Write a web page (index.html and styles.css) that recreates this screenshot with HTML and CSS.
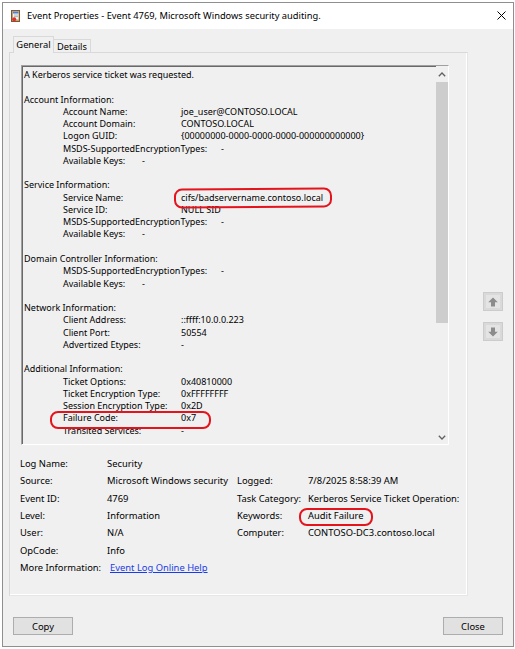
FILE: index.html
```html
<!DOCTYPE html>
<html>
<head>
<meta charset="utf-8">
<title>Event Properties</title>
<link rel="stylesheet" href="styles.css">
</head>
<body>
<div class="page">
  <div class="window">
    <div class="titlebar">
      <svg class="appicon" width="9" height="12" viewBox="0 0 9 12">
        <rect x="0.5" y="0.5" width="8" height="11" fill="#c9a26a" stroke="#7a5a2e"/>
        <rect x="2" y="1.5" width="5.5" height="8" fill="#f4f4f4"/>
        <rect x="2" y="1.5" width="5.5" height="2" fill="#4f7fd0"/>
        <line x1="3" y1="5" x2="7" y2="5" stroke="#9aa" stroke-width="0.8"/>
        <line x1="3" y1="6.6" x2="7" y2="6.6" stroke="#9aa" stroke-width="0.8"/>
        <circle cx="3.2" cy="9.2" r="2" fill="#e03030"/>
      </svg>
      <span class="title">Event Properties - Event 4769, Microsoft Windows security auditing.</span>
      <svg class="closex" width="9" height="9" viewBox="0 0 9 9">
        <path d="M0.5 0.5 L8.5 8.5 M8.5 0.5 L0.5 8.5" stroke="#000" stroke-width="1"/>
      </svg>
    </div>
    <div class="body">
      <div class="main">
        <div class="tabwrap">
          <div class="tabs">
            <div class="tab sel">General</div>
            <div class="tab">Details</div>
          </div>
          <div class="panel">
            <div class="textbox">
              <div class="tbtext">
                <div class="ln">A Kerberos service ticket was requested.</div>
                <div class="ln"></div>
                <div class="ln">Account Information:</div>
                <div class="ln in"><span class="k k4">Account Name:</span><span>joe_user@CONTOSO.LOCAL</span></div>
                <div class="ln in"><span class="k k4">Account Domain:</span><span>CONTOSO.LOCAL</span></div>
                <div class="ln in"><span class="k k4">Logon GUID:</span><span>{00000000-0000-0000-0000-000000000000}</span></div>
                <div class="ln in"><span class="k k5">MSDS-SupportedEncryptionTypes:</span><span>-</span></div>
                <div class="ln in"><span class="k k3">Available Keys:</span><span>-</span></div>
                <div class="ln"></div>
                <div class="ln">Service Information:</div>
                <div class="ln in"><span class="k k4">Service Name:</span><span>cifs/badservername.contoso.local</span></div>
                <div class="ln in"><span class="k k4">Service ID:</span><span>NULL SID</span></div>
                <div class="ln in"><span class="k k5">MSDS-SupportedEncryptionTypes:</span><span>-</span></div>
                <div class="ln in"><span class="k k3">Available Keys:</span><span>-</span></div>
                <div class="ln"></div>
                <div class="ln">Domain Controller Information:</div>
                <div class="ln in"><span class="k k5">MSDS-SupportedEncryptionTypes:</span><span>-</span></div>
                <div class="ln in"><span class="k k3">Available Keys:</span><span>-</span></div>
                <div class="ln"></div>
                <div class="ln">Network Information:</div>
                <div class="ln in"><span class="k k4">Client Address:</span><span>::ffff:10.0.0.223</span></div>
                <div class="ln in"><span class="k k4">Client Port:</span><span>50554</span></div>
                <div class="ln in"><span class="k k4">Advertized Etypes:</span><span>-</span></div>
                <div class="ln"></div>
                <div class="ln">Additional Information:</div>
                <div class="ln in"><span class="k k4">Ticket Options:</span><span>0x40810000</span></div>
                <div class="ln in"><span class="k k4">Ticket Encryption Type:</span><span>0xFFFFFFFF</span></div>
                <div class="ln in"><span class="k k4">Session Encryption Type:</span><span>0x2D</span></div>
                <div class="ln in"><span class="k k4">Failure Code:</span><span>0x7</span></div>
                <div class="ln in"><span class="k k4">Transited Services:</span><span>-</span></div>
              </div>
              <div class="scrollbar">
                <div class="sbbtn">
                  <svg width="8" height="5" viewBox="0 0 8 5"><path d="M0.8 4.2 L4 1 L7.2 4.2" fill="none" stroke="#606060" stroke-width="1.3"/></svg>
                </div>
                <div class="track"><div class="thumb"></div></div>
                <div class="sbbtn">
                  <svg width="8" height="5" viewBox="0 0 8 5"><path d="M0.8 0.8 L4 4 L7.2 0.8" fill="none" stroke="#606060" stroke-width="1.3"/></svg>
                </div>
              </div>
            </div>
            <div class="props">
              <span>Log Name:</span><span>Security</span><span></span><span></span>
              <span>Source:</span><span>Microsoft Windows security</span><span>Logged:</span><span>7/8/2025 8:58:39 AM</span>
              <span>Event ID:</span><span>4769</span><span>Task Category:</span><span>Kerberos Service Ticket Operation:</span>
              <span>Level:</span><span>Information</span><span>Keywords:</span><span>Audit Failure</span>
              <span>User:</span><span>N/A</span><span>Computer:</span><span>CONTOSO-DC3.contoso.local</span>
              <span>OpCode:</span><span>Info</span><span></span><span></span>
              <span>More Information:</span><span><a class="link" href="#">Event Log Online Help</a></span><span></span><span></span>
            </div>
          </div>
        </div>
        <div class="side">
          <div class="navbtn">
            <span class="navin"><svg width="10" height="10" viewBox="0 0 10 10"><path d="M5 0.5 L9.8 5.3 L7 5.3 L7 9.5 L3 9.5 L3 5.3 L0.2 5.3 Z" fill="#8c8c8c"/></svg></span>
          </div>
          <div class="navbtn second">
            <span class="navin"><svg width="10" height="10" viewBox="0 0 10 10"><path d="M5 9.5 L9.8 4.7 L7 4.7 L7 0.5 L3 0.5 L3 4.7 L0.2 4.7 Z" fill="#8c8c8c"/></svg></span>
          </div>
        </div>
      </div>
      <div class="buttons">
        <div class="btn">Copy</div>
        <div class="btn">Close</div>
      </div>
    </div>
  </div>
  <div class="mark mark-service"></div>
  <div class="mark mark-failure"></div>
  <div class="mark mark-audit"></div>
</div>
</body>
</html>
```
FILE: styles.css
```css
* { box-sizing: border-box; }
html, body { margin: 0; padding: 0; background: #ffffff; }
body {
  font-family: "Noto Sans", "Open Sans", sans-serif;
  font-size: 9px;
  color: #000;
}
.page { position: relative; width: 515px; height: 649px; }
.window {
  margin: 2px 0 0 2px;
  width: 512px;
  height: 645px;
  border: 1px solid #8f8f8f;
  background: #f0f0f0;
  display: flex;
  flex-direction: column;
}
.titlebar {
  height: 26px;
  background: #ffffff;
  display: flex;
  align-items: center;
  padding-bottom: 1px;
}
.appicon { margin-left: 8px; flex: none; }
.title { margin-left: 7px; font-size: 9.3px; flex: 1; white-space: nowrap; }
.closex { margin-right: 7px; flex: none; }
.body {
  height: 617px;
  padding-top: 7px;
  display: flex;
  flex-direction: column;
}
.main { display: flex; }
.tabwrap { margin-left: 6px; width: 459px; }
.tabs {
  height: 16px;
  display: flex;
  align-items: flex-end;
  margin-left: 4px;
  position: relative;
  z-index: 1;
}
.tab {
  display: flex;
  align-items: center;
  justify-content: center;
  border: 1px solid #d9d9d9;
  border-bottom: none;
  background: #f0f0f0;
  white-space: nowrap;
  font-size: 9.3px;
}
.tab.sel { width: 41px; height: 17px; margin-bottom: -1px; padding-bottom: 1px; }
.tab:not(.sel) { width: 37px; height: 13px; border-left: none; padding-top: 1px; }
.panel {
  height: 544px;
  border: 1px solid #d9d9d9;
  border-right-color: #e6e6e6;
  border-bottom-color: #e6e6e6;
  box-shadow: inset -1px -1px 0 #ffffff;
  padding: 12px 0 0 11px;
}
.textbox {
  width: 428px;
  height: 380px;
  border: 1px solid #a0a0a0;
  border-right-color: #ffffff;
  border-bottom-color: #ffffff;
  box-shadow: inset 1px 1px 0 #696969;
  display: flex;
  overflow: hidden;
}
.tbtext {
  flex: 1;
  padding: 3px 0 0 2px;
  overflow: hidden;
}
.ln {
  height: 12.28px;
  line-height: 12.28px;
  white-space: nowrap;
  display: flex;
}
.ln.in { padding-left: 39px; }
.k { flex: none; }
.k3 { min-width: 79px; }
.k4 { min-width: 118px; }
.k5 { min-width: 158px; }
.scrollbar {
  width: 12px;
  flex: none;
  display: flex;
  flex-direction: column;
  background: #f0f0f0;
  padding-top: 1px;
}
.sbbtn {
  height: 14px;
  flex: none;
  display: flex;
  align-items: center;
  justify-content: center;
}
.track { flex: 1; padding-top: 1px; }
.thumb { height: 241px; background: #cdcdcd; }
.props {
  margin-top: 10px;
  margin-left: -1px;
  display: grid;
  grid-template-columns: 87px 130px 71px 1fr;
  grid-auto-rows: 17.3px;
  align-items: center;
  white-space: nowrap;
  font-size: 9.4px;
}
.link { color: #1a3ce8; text-decoration: underline; margin-left: 3px; }
.side { margin-left: 15px; padding-top: 256px; }
.navbtn {
  width: 20px;
  height: 19px;
  border: 1px solid #cccccc;
  background: #d9d9d9;
  display: flex;
  align-items: center;
  justify-content: center;
}
.navbtn.second { margin-top: 11px; }
.navin {
  width: 14px;
  height: 13px;
  background: #e4e4e4;
  display: flex;
  align-items: center;
  justify-content: center;
}
.buttons {
  margin-top: 21px;
  padding: 0 10px;
  display: flex;
  justify-content: space-between;
}
.btn {
  width: 60px;
  height: 18px;
  border: 1px solid #adadad;
  background: #e1e1e1;
  display: flex;
  align-items: center;
  justify-content: center;
  font-size: 9.4px;
}
.mark {
  position: absolute;
  border: 2px solid #e5131c;
  border-radius: 8px;
}
.mark-service { left: 174px; top: 186px; width: 158px; height: 20px; transform: rotate(-0.4deg); }
.mark-failure { left: 50px; top: 409px; width: 161px; height: 18px; }
.mark-audit { left: 299px; top: 506px; width: 74px; height: 18px; }
```
